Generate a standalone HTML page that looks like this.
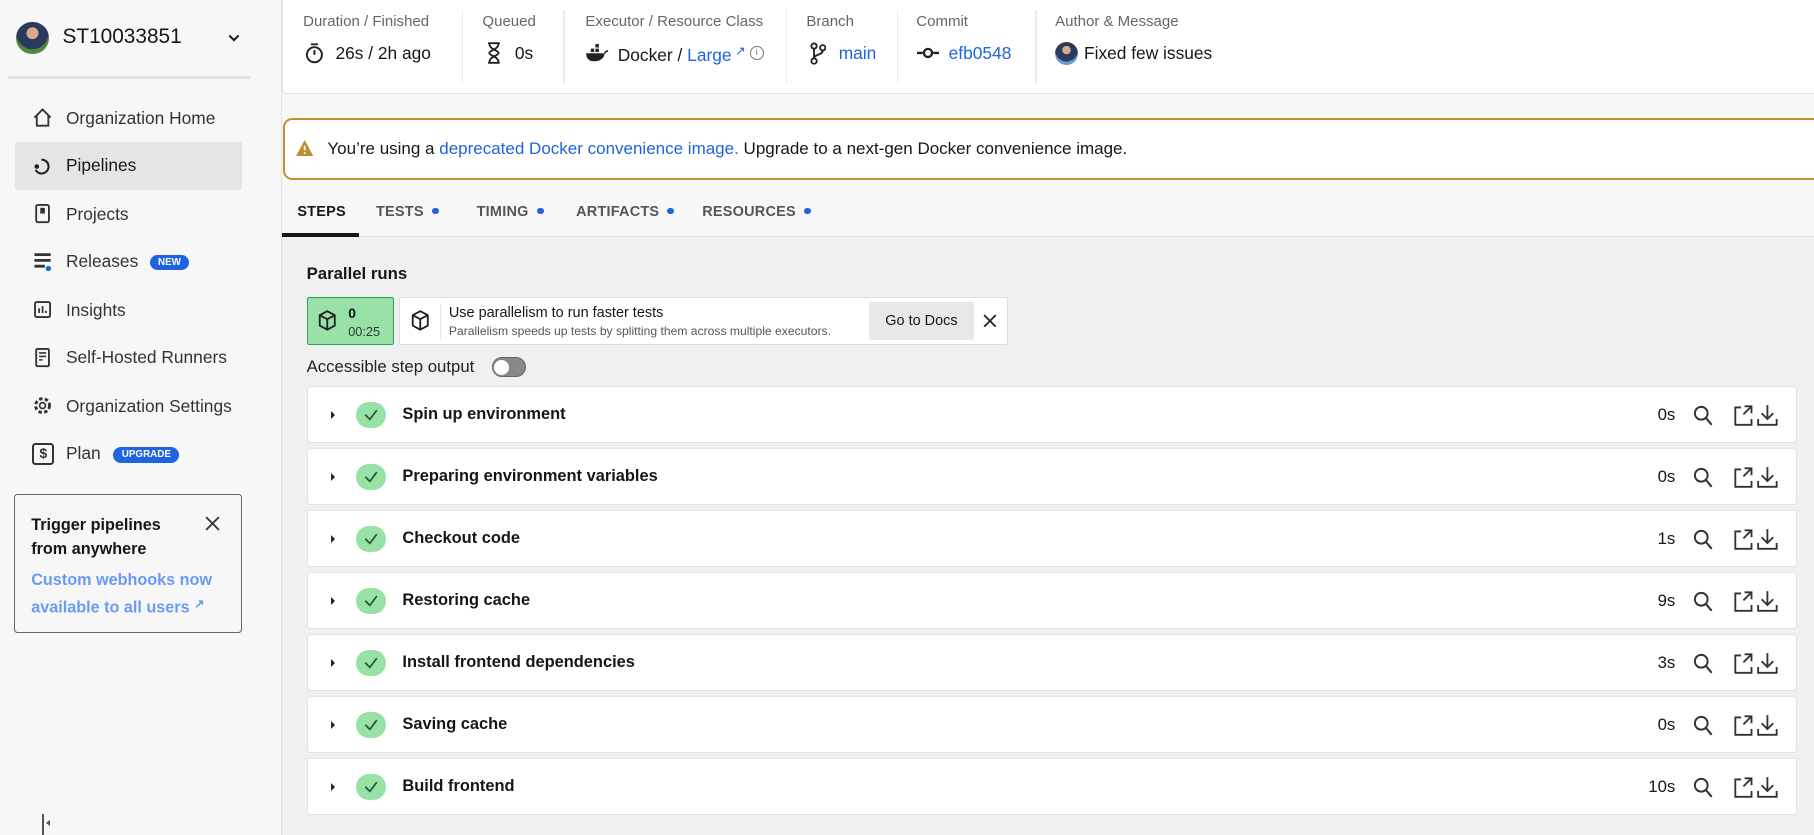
<!DOCTYPE html>
<html><head><meta charset="utf-8"><style>
*{box-sizing:border-box;margin:0;padding:0}
html,body{width:1814px;height:835px;overflow:hidden;background:#f0f0f0}
#r{zoom:1.15689;width:1568px;height:722px;position:relative;font-family:"Liberation Sans",sans-serif;color:#161616;overflow:hidden}
.a{position:absolute;white-space:nowrap}
.side{position:absolute;left:0;top:0;width:244px;height:722px;background:#f7f7f7;border-right:1px solid #e2e2e2}
.nav{position:absolute;left:57px;font-size:15px;color:#333}
.ic{position:absolute;left:27px;width:20px;height:20px}
.lbl{font-size:13px;color:#666;top:11px}
.val{font-size:15px;top:37px}
.div{position:absolute;top:9px;width:1px;height:63px;background:#ebebeb}
.blue{color:#1f63e0}
.tab{position:absolute;top:176px;font-size:12.5px;font-weight:bold;color:#555;letter-spacing:.2px}
.dot{display:inline-block;width:6px;height:6px;border-radius:50%;background:#1f63e0;margin-left:7px;vertical-align:1px}
.row{position:absolute;left:265px;width:1288px;height:49px;background:#fff;border:1px solid #e2e2e2;border-radius:3px}
.row .t{position:absolute;left:82px;top:15px;font-size:14.2px;font-weight:bold}
.row .chk{position:absolute;left:42px;top:13px;width:26px;height:22px;border-radius:11px;background:#98e2a8}
.row .car{position:absolute;left:20px;top:20px;width:0;height:0;border-left:4px solid #222;border-top:4px solid transparent;border-bottom:4px solid transparent}
.row .d{position:absolute;right:104px;top:15px;font-size:14.5px}
.row svg.ri{position:absolute;top:14px}
</style></head><body><div id="r">
<div class="side">
  <div class="a" style="left:14px;top:19px;width:28px;height:28px;border-radius:50%;background:radial-gradient(circle at 50% 35%,#d9a88a 0 22%,#2b3a5a 23% 60%,#4f8a3f 61% 80%,#6a9ad0 81%)"></div>
  <div class="a" style="left:54px;top:22px;font-size:18px;font-weight:500;color:#161616">ST10033851</div>
  <svg class="a" style="left:196px;top:28px" width="12" height="10" viewBox="0 0 12 10"><path d="M2 3l4 4 4-4" fill="none" stroke="#222" stroke-width="1.8"/></svg>
  <div class="a" style="left:7px;top:66px;width:209px;height:2px;background:#e2e2e2"></div>
  <div class="a" style="left:13px;top:123px;width:196px;height:41px;background:#e5e5e5;border-radius:2px"></div>
  <svg class="ic" style="top:92px" viewBox="0 0 20 20"><path d="M3 10L10 3l7 7M5 8v9h10V8" fill="none" stroke="#333" stroke-width="1.6"/></svg>
  <div class="nav" style="top:93px">Organization Home</div>
  <svg class="ic" style="top:134px" viewBox="0 0 20 20"><path d="M9 4a6 6 0 1 1 -5 9" fill="none" stroke="#222" stroke-width="1.8"/><circle cx="5" cy="10" r="2" fill="#222"/></svg>
  <div class="nav" style="top:134px;color:#161616">Pipelines</div>
  <svg class="ic" style="top:175px" viewBox="0 0 20 20"><rect x="4.5" y="2.5" width="11" height="15" rx="1.5" fill="none" stroke="#333" stroke-width="1.6"/><rect x="8" y="5" width="4" height="5" fill="#333"/></svg>
  <div class="nav" style="top:176px">Projects</div>
  <svg class="ic" style="top:216px" viewBox="0 0 20 20"><path d="M3 4h14M3 9h14M3 14h9" stroke="#333" stroke-width="2.4"/><circle cx="15" cy="16" r="2.3" fill="#1f63e0"/></svg>
  <div class="nav" style="top:217px">Releases</div>
  <div class="a" style="left:130px;top:220px;width:33px;height:13px;border-radius:7px;background:#1f63e0;color:#fff;font-size:8.5px;font-weight:bold;text-align:center;line-height:13px">NEW</div>
  <svg class="ic" style="top:258px" viewBox="0 0 20 20"><rect x="3.5" y="3.5" width="13" height="13" rx="1.5" fill="none" stroke="#333" stroke-width="1.6"/><path d="M7 13V9M10 13V7M13 13v-2" stroke="#333" stroke-width="1.5"/></svg>
  <div class="nav" style="top:259px">Insights</div>
  <svg class="ic" style="top:299px" viewBox="0 0 20 20"><rect x="4.5" y="2.5" width="11" height="15" rx="1" fill="none" stroke="#333" stroke-width="1.6"/><path d="M7 6h6M7 9h6M7 12h3" stroke="#333" stroke-width="1.4"/></svg>
  <div class="nav" style="top:300px">Self-Hosted Runners</div>
  <svg class="ic" style="top:341px" viewBox="0 0 20 20"><circle cx="10" cy="10" r="6" fill="none" stroke="#333" stroke-width="2.5" stroke-dasharray="3 2"/><circle cx="10" cy="10" r="2.5" fill="none" stroke="#333" stroke-width="1.5"/></svg>
  <div class="nav" style="top:342px">Organization Settings</div>
  <div class="a" style="left:28px;top:383px;width:19px;height:19px;border:2px solid #333;border-radius:3px;font-size:12px;font-weight:bold;text-align:center;line-height:15px;color:#333">$</div>
  <div class="nav" style="top:383px">Plan</div>
  <div class="a" style="left:98px;top:386px;width:57px;height:14px;border-radius:7px;background:#1f63e0;color:#fff;font-size:8.5px;font-weight:bold;text-align:center;line-height:14px">UPGRADE</div>
  <div class="a" style="left:12px;top:427px;width:197px;height:120px;border:1px solid #666;border-radius:3px"></div>
  <div class="a" style="left:27px;top:443px;font-size:14px;font-weight:bold;line-height:21px">Trigger pipelines<br>from anywhere</div>
  <svg class="a" style="left:177px;top:446px" width="13" height="13" viewBox="0 0 13 13"><path d="M1 1l11 11M12 1L1 12" stroke="#333" stroke-width="1.6"/></svg>
  <div class="a" style="left:27px;top:491px;font-size:14px;font-weight:bold;line-height:21px;color:#6b9af5">Custom webhooks now<br>available to all users <span style="font-size:11px;vertical-align:4px">↗</span></div>
  <div class="a" style="left:36px;top:704px;width:2px;height:18px;background:#555"></div>
  <div class="a" style="left:40px;top:709px;border-right:4px solid #555;border-top:3px solid transparent;border-bottom:3px solid transparent"></div>
</div>

<div class="a" style="left:244px;top:0;width:1324px;height:81px;background:#fff;border-bottom:1px solid #e2e2e2;border-left:1px solid #e2e2e2;border-bottom-left-radius:3px"></div>
<div class="a lbl" style="left:262px">Duration / Finished</div>
<svg class="a" style="left:263px;top:36px" width="18" height="19" viewBox="0 0 18 19"><circle cx="9" cy="11" r="6.5" fill="none" stroke="#222" stroke-width="1.7"/><path d="M6 2h6M9 11V7" stroke="#222" stroke-width="1.7"/></svg>
<div class="a val" style="left:290px">26s / 2h ago</div>
<div class="div" style="left:399px"></div>
<div class="a lbl" style="left:417px">Queued</div>
<svg class="a" style="left:421px;top:36px" width="12" height="19" viewBox="0 0 12 19"><path d="M1 1h10M1 18h10M2 1c0 6 8 6 8 8.5S2 12 2 18M10 1c0 6-8 6-8 8.5S10 12 10 18" fill="none" stroke="#222" stroke-width="1.6"/></svg>
<div class="a val" style="left:445px">0s</div>
<div class="div" style="left:487px"></div>
<div class="a lbl" style="left:506px">Executor / Resource Class</div>
<svg class="a" style="left:506px;top:38px" width="20" height="16" viewBox="0 0 20 16"><path d="M1 8h16c0 4-4 7-9 7S1 12 1 8z" fill="#222"/><rect x="5" y="4" width="3" height="3" fill="#222"/><rect x="9" y="4" width="3" height="3" fill="#222"/><rect x="9" y="0" width="3" height="3" fill="#222"/><path d="M17 8c1-2 2-2 3-2" stroke="#222" stroke-width="1.5"/></svg>
<div class="a val" style="left:534px">Docker / <span class="blue">Large</span><span class="blue" style="font-size:11px;vertical-align:5px"> ↗</span></div>
<div class="a" style="left:648px;top:40px;width:12px;height:12px;border:1px solid #777;border-radius:50%;font-size:8px;text-align:center;line-height:10px;color:#777">i</div>
<div class="div" style="left:679px"></div>
<div class="a lbl" style="left:697px">Branch</div>
<svg class="a" style="left:700px;top:36px" width="14" height="20" viewBox="0 0 14 20"><circle cx="3.5" cy="3.5" r="2.3" fill="none" stroke="#222" stroke-width="1.6"/><circle cx="3.5" cy="16.5" r="2.3" fill="none" stroke="#222" stroke-width="1.6"/><circle cx="11" cy="5" r="2.3" fill="none" stroke="#222" stroke-width="1.6"/><path d="M3.5 6v8M11 7.5c0 4-7.5 3-7.5 6.5" fill="none" stroke="#222" stroke-width="1.6"/></svg>
<div class="a val blue" style="left:725px">main</div>
<div class="div" style="left:775px"></div>
<div class="a lbl" style="left:792px">Commit</div>
<svg class="a" style="left:793px;top:40px" width="19" height="12" viewBox="0 0 19 12"><path d="M0 6h5M14 6h5" stroke="#222" stroke-width="2"/><circle cx="9.5" cy="6" r="3.5" fill="none" stroke="#222" stroke-width="2"/></svg>
<div class="a val blue" style="left:820px">efb0548</div>
<div class="div" style="left:895px"></div>
<div class="a lbl" style="left:912px">Author &amp; Message</div>
<div class="a" style="left:912px;top:36px;width:20px;height:20px;border-radius:50%;background:radial-gradient(circle at 50% 35%,#d9a88a 0 22%,#2b3a5a 23% 60%,#6a9ad0 61%)"></div>
<div class="a val" style="left:937px">Fixed few issues</div>

<div class="a" style="left:244px;top:81px;width:1324px;height:124px;background:#f7f7f7"></div>
<div class="a" style="left:245px;top:102px;width:1340px;height:54px;background:#fff;border:2px solid #c48c35;border-radius:8px"></div>
<svg class="a" style="left:256px;top:121px" width="15" height="14" viewBox="0 0 15 14"><path d="M7.5 0L15 14H0z" fill="#c48c35"/><path d="M7.5 5v4M7.5 10.5v1.5" stroke="#fff" stroke-width="1.5"/></svg>
<div class="a" style="left:283px;top:120px;font-size:14.7px">You’re using a <span class="blue">deprecated Docker convenience image.</span> Upgrade to a next-gen Docker convenience image.</div>

<div class="tab" style="left:257px;color:#161616">STEPS</div>
<div class="a" style="left:244px;top:201px;width:66px;height:4px;background:#161616"></div>
<div class="tab" style="left:325px">TESTS<span class="dot"></span></div>
<div class="tab" style="left:412px">TIMING<span class="dot"></span></div>
<div class="tab" style="left:498px">ARTIFACTS<span class="dot"></span></div>
<div class="tab" style="left:607px">RESOURCES<span class="dot"></span></div>
<div class="a" style="left:310px;top:204px;width:1258px;height:1px;background:#e2e2e2"></div>

<div class="a" style="left:265px;top:228px;font-size:14.5px;font-weight:bold">Parallel runs</div>
<div class="a" style="left:265px;top:257px;width:76px;height:41px;background:#98e2a8;border:1px solid #2f9e4f;border-radius:2px"></div>
<svg class="a" style="left:275px;top:268px" width="16" height="18" viewBox="0 0 16 18"><path d="M8 1l6.5 3.5v9L8 17 1.5 13.5v-9zM1.5 4.5L8 8l6.5-3.5M8 8v9" fill="none" stroke="#222" stroke-width="1.6"/></svg>
<div class="a" style="left:301px;top:264px;font-size:12px;font-weight:bold">0</div>
<div class="a" style="left:301px;top:280px;font-size:11px;color:#333">00:25</div>
<div class="a" style="left:345px;top:257px;width:526px;height:41px;background:#fff;border:1px solid #ddd;border-radius:2px"></div>
<svg class="a" style="left:355px;top:268px" width="16" height="18" viewBox="0 0 16 18"><path d="M8 1l6.5 3.5v9L8 17 1.5 13.5v-9zM1.5 4.5L8 8l6.5-3.5M8 8v9" fill="none" stroke="#222" stroke-width="1.6"/></svg>
<div class="a" style="left:380px;top:262px;width:1px;height:32px;background:#e6e6e6"></div>
<div class="a" style="left:388px;top:264px;font-size:12.5px">Use parallelism to run faster tests</div>
<div class="a" style="left:388px;top:280px;font-size:10.5px;color:#555">Parallelism speeds up tests by splitting them across multiple executors.</div>
<div class="a" style="left:751px;top:261px;width:91px;height:33px;background:#e8e8e8;border-radius:2px;font-size:12.5px;text-align:center;line-height:33px">Go to Docs</div>
<svg class="a" style="left:850px;top:271px" width="12" height="12" viewBox="0 0 12 12"><path d="M1 1l10 10M11 1L1 11" stroke="#222" stroke-width="1.6"/></svg>
<div class="a" style="left:265px;top:309px;font-size:14.5px;color:#222">Accessible step output</div>
<div class="a" style="left:425px;top:309px;width:30px;height:17px;border-radius:9px;background:#888;border:1px solid #666"></div>
<div class="a" style="left:427px;top:311px;width:13px;height:13px;border-radius:50%;background:#fff"></div>

<div id="rows"></div>
<script>
var s=[["Spin up environment","0s"],["Preparing environment variables","0s"],["Checkout code","1s"],["Restoring cache","9s"],["Install frontend dependencies","3s"],["Saving cache","0s"],["Build frontend","10s"]];
var h="";s.forEach(function(x,i){var t=334+i*53.6;
h+='<div class="row" style="top:'+t+'px"><div class="car"></div><div class="chk"><svg width="26" height="22" viewBox="0 0 26 22"><path d="M8 11l4 4 6-8" fill="none" stroke="#1c5a2c" stroke-width="1.5"/></svg></div><div class="t">'+x[0]+'</div><div class="d">'+x[1]+'</div>'
+'<svg class="ri" style="left:1197px" width="20" height="20" viewBox="0 0 20 20"><circle cx="8" cy="8" r="5.5" fill="none" stroke="#333" stroke-width="1.7"/><path d="M12 12l5 6" stroke="#333" stroke-width="1.8"/></svg>'
+'<svg class="ri" style="left:1232px" width="18" height="20" viewBox="0 0 18 20"><path d="M7 3H2v15h14v-5M10 2h6v6M16 2l-7 7" fill="none" stroke="#333" stroke-width="1.6"/></svg>'
+'<svg class="ri" style="left:1253px" width="18" height="20" viewBox="0 0 18 20"><path d="M9 1v12M4 8l5 5 5-5M1 13v5h16v-5" fill="none" stroke="#333" stroke-width="1.6"/></svg></div>';});
document.getElementById("rows").innerHTML=h;
</script>
</div></body></html>
